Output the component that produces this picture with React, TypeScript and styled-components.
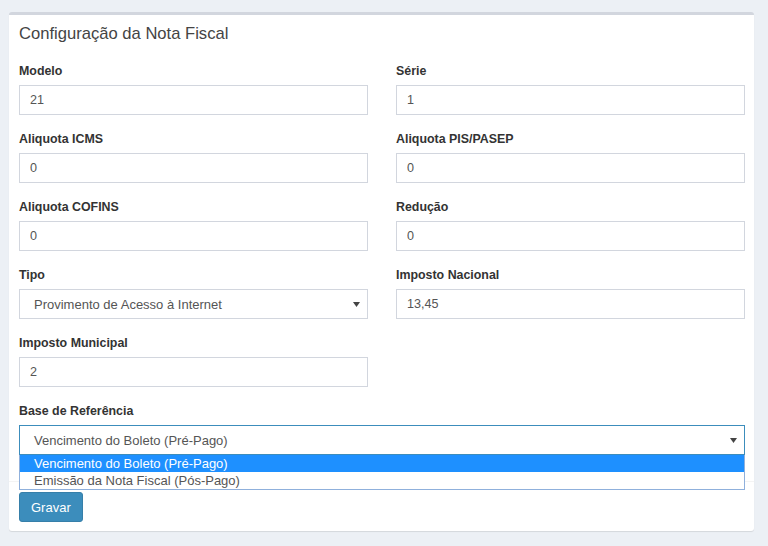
import styled, { createGlobalStyle } from 'styled-components';

const GlobalStyle = createGlobalStyle`
  html, body {
    margin: 0;
    padding: 0;
    background: #ecf0f5;
    font-family: 'Liberation Sans', Arial, sans-serif;
  }
`;

const Page = styled.div`
  padding: 12px 0 16px 9px;
`;

const Box = styled.div`
  width: 745px;
  background: #fff;
  border-top: 3px solid #d2d6de;
  border-radius: 3px;
  box-shadow: 0 1px 1px rgba(0, 0, 0, 0.1);
`;

const BoxHeader = styled.div`
  padding: 9px 10px;
`;

const BoxTitle = styled.h3`
  margin: 0;
  font-size: 16.6px;
  line-height: 19px;
  font-weight: 400;
  color: #444;
`;

const BoxBody = styled.div`
  padding: 10px 9px 11px 10px;
  display: grid;
  grid-template-columns: 1fr 1fr;
  column-gap: 28px;
`;

const FormGroup = styled.div<{ $full?: boolean }>`
  margin-bottom: 15px;
  grid-column: ${(p) => (p.$full ? '1 / span 2' : 'auto')};
  position: relative;
`;

const Label = styled.label`
  display: block;
  font-size: 12.4px;
  line-height: 18px;
  font-weight: 700;
  color: #333;
  margin-bottom: 5px;
`;

const Input = styled.input`
  display: block;
  box-sizing: border-box;
  width: 100%;
  height: 30px;
  padding: 0 10px;
  border: 1px solid #d2d6de;
  border-radius: 0;
  font-family: inherit;
  font-size: 12.6px;
  color: #555;
  outline: none;
`;

const SelectBox = styled.div<{ $focused?: boolean }>`
  box-sizing: border-box;
  height: 30px;
  display: flex;
  align-items: center;
  justify-content: space-between;
  padding: 0 7px 0 14px;
  border: 1px solid ${(p) => (p.$focused ? '#3c8dbc' : '#d2d6de')};
  font-size: 13px;
  color: #555;
`;

const Caret = styled.svg`
  width: 7px;
  height: 5px;
  fill: #444;
`;

const OptionList = styled.ul`
  position: absolute;
  top: 100%;
  left: 0;
  right: 0;
  margin: 0;
  padding: 0;
  list-style: none;
  background: #fff;
  border: 1px solid #8fb0dc;
  border-top: none;
  z-index: 2;
`;

const OptionItem = styled.li<{ $active?: boolean }>`
  height: 17px;
  line-height: 17px;
  padding-left: 14px;
  font-size: 13px;
  color: ${(p) => (p.$active ? '#fff' : '#555')};
  background: ${(p) => (p.$active ? '#1e90ff' : 'transparent')};
`;

const BoxFooter = styled.div`
  border-top: 1px solid #f4f4f4;
  padding: 10px 10px 9px;
`;

const Button = styled.button`
  height: 30px;
  padding: 0 11px;
  border: 1px solid #367fa9;
  border-radius: 3px;
  background: #3c8dbc;
  color: #fff;
  font-family: inherit;
  font-size: 13px;
`;

function Select({ value, focused }: { value: string; focused?: boolean }) {
  return (
    <SelectBox $focused={focused}>
      <span>{value}</span>
      <Caret viewBox="0 0 7 5">
        <path d="M0 0h7L3.5 5z" />
      </Caret>
    </SelectBox>
  );
}

const fields = [
  { label: 'Modelo', value: '21' },
  { label: 'Série', value: '1' },
  { label: 'Aliquota ICMS', value: '0' },
  { label: 'Aliquota PIS/PASEP', value: '0' },
  { label: 'Aliquota COFINS', value: '0' },
  { label: 'Redução', value: '0' },
];

export default function App() {
  return (
    <Page>
      <GlobalStyle />
      <Box>
        <BoxHeader>
          <BoxTitle>Configuração da Nota Fiscal</BoxTitle>
        </BoxHeader>
        <BoxBody>
          {fields.map((f) => (
            <FormGroup key={f.label}>
              <Label>{f.label}</Label>
              <Input defaultValue={f.value} />
            </FormGroup>
          ))}
          <FormGroup>
            <Label>Tipo</Label>
            <Select value="Provimento de Acesso à Internet" />
          </FormGroup>
          <FormGroup>
            <Label>Imposto Nacional</Label>
            <Input defaultValue="13,45" />
          </FormGroup>
          <FormGroup>
            <Label>Imposto Municipal</Label>
            <Input defaultValue="2" />
          </FormGroup>
          <div />
          <FormGroup $full>
            <Label>Base de Referência</Label>
            <Select value="Vencimento do Boleto (Pré-Pago)" focused />
            <OptionList>
              <OptionItem $active>Vencimento do Boleto (Pré-Pago)</OptionItem>
              <OptionItem>Emissão da Nota Fiscal (Pós-Pago)</OptionItem>
            </OptionList>
          </FormGroup>
        </BoxBody>
        <BoxFooter>
          <Button>Gravar</Button>
        </BoxFooter>
      </Box>
    </Page>
  );
}
